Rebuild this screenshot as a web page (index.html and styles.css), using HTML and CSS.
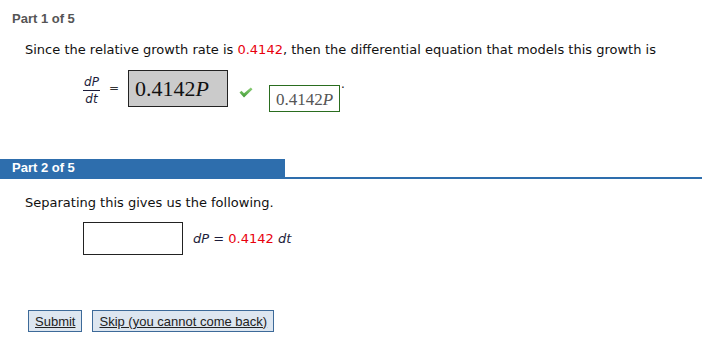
FILE: index.html
```html
<!DOCTYPE html>
<html lang="en">
<head>
  <meta charset="UTF-8">
  <title>Part 1 of 5</title>
  <link rel="stylesheet" href="styles.css">
</head>
<body>
  <div class="part">
    <div class="part-title">Part 1 of 5</div>
    <div class="part-body">
      <p class="question">Since the relative growth rate is <span class="num">0.4142</span>, then the differential equation that models this growth is</p>
      <div class="eq">
        <div class="frac">
          <span class="top">dP</span>
          <span class="bottom">dt</span>
        </div>
        <span class="equals">=</span>
        <div class="answer">0.4142<i>P</i></div>
        <svg class="check" width="14" height="11" viewBox="0 0 14 11">
          <defs>
            <linearGradient id="g" x1="0" y1="0" x2="0" y2="1">
              <stop offset="0" stop-color="#8fd07a"/>
              <stop offset="1" stop-color="#3f9a33"/>
            </linearGradient>
          </defs>
          <path d="M0.5 5.5 L2.5 3.8 L5 6.2 L11.8 0.5 L13.5 2.2 L5 10.5 Z" fill="url(#g)"/>
        </svg>
        <div class="correct">0.4142<i>P</i></div><span class="dot">.</span>
      </div>
    </div>
  </div>

  <div class="part">
    <div class="part-bar"><div class="part-tab">Part 2 of 5</div></div>
    <div class="part-body">
      <p class="question second">Separating this gives us the following.</p>
      <div class="eq2">
        <div class="blank"></div>
        <span class="expr"><i>dP</i> = <span class="num">0.4142</span> <i>dt</i></span>
      </div>
      <div class="buttons">
        <button class="btn">Submit</button>
        <button class="btn">Skip (you cannot come back)</button>
      </div>
    </div>
  </div>
</body>
</html>
```

FILE: styles.css
```css
* {
  box-sizing: border-box;
}
body {
  margin: 0;
  background: #fff;
  font-family: "DejaVu Sans", Verdana, sans-serif;
  font-size: 13px;
  color: #111;
}
p {
  margin: 0;
}
.part-title {
  font-family: "Liberation Sans", Arial, sans-serif;
  font-weight: bold;
  font-size: 13px;
  color: #555;
  padding: 11px 0 0 12px;
  height: 42px;
}
.part-body {
  padding-left: 25px;
}
.question {
  line-height: 16px;
}
.num {
  color: #e8000d;
}
.eq {
  display: flex;
  align-items: flex-start;
  margin-top: 12px;
  padding-left: 56px;
  height: 48px;
}
.frac {
  display: flex;
  flex-direction: column;
  align-items: center;
  font-style: italic;
  font-size: 12px;
  color: #1c1c3a;
  margin-top: 5px;
  width: 21px;
}
.frac .top {
  border-bottom: 1px solid #1c1c3a;
  padding: 0 1px 1px;
  line-height: 14px;
}
.frac .bottom {
  line-height: 15px;
  padding-top: 1px;
}
.equals {
  font-size: 12px;
  margin: 11px 0 0 7px;
  color: #333;
}
.answer {
  width: 100px;
  height: 37px;
  margin-left: 9px;
  background: #cbcbcb;
  border: 1px solid #222;
  font-family: "Liberation Serif", "Times New Roman", serif;
  font-size: 22px;
  line-height: 35px;
  padding-left: 6px;
  color: #111;
}
.check {
  margin: 17px 0 0 11px;
}
.correct {
  margin: 15px 0 0 16px;
  width: 71px;
  height: 27px;
  border: 1px solid #2a6d1f;
  font-family: "Liberation Serif", "Times New Roman", serif;
  font-size: 17px;
  line-height: 27px;
  color: #555;
  text-align: center;
}
.dot {
  font-size: 12px;
  line-height: 12px;
  margin: 8px 0 0 1px;
}
.part-bar {
  border-bottom: 2px solid #2e6ead;
  margin-top: 41px;
}
.part-tab {
  width: 285px;
  height: 18px;
  background: #2e6ead;
  color: #fff;
  font-family: "Liberation Sans", Arial, sans-serif;
  font-weight: bold;
  font-size: 13px;
  line-height: 18px;
  padding-left: 12px;
}
.second {
  margin-top: 16px;
}
.eq2 {
  display: flex;
  align-items: center;
  margin: 11px 0 0 58px;
}
.blank {
  width: 100px;
  height: 33px;
  border: 1px solid #222;
}
.expr {
  margin-left: 10px;
  color: #1c1c3a;
}
.buttons {
  display: flex;
  gap: 10px;
  margin: 55px 0 0 3px;
}
.btn {
  font-family: "Liberation Sans", Arial, sans-serif;
  font-size: 13px;
  color: #222;
  text-decoration: underline;
  background: #dde6f0;
  border: 1px solid #3d6a99;
  height: 22px;
  padding: 0 6px;
  margin: 0;
  border-radius: 0;
  cursor: pointer;
}
```
